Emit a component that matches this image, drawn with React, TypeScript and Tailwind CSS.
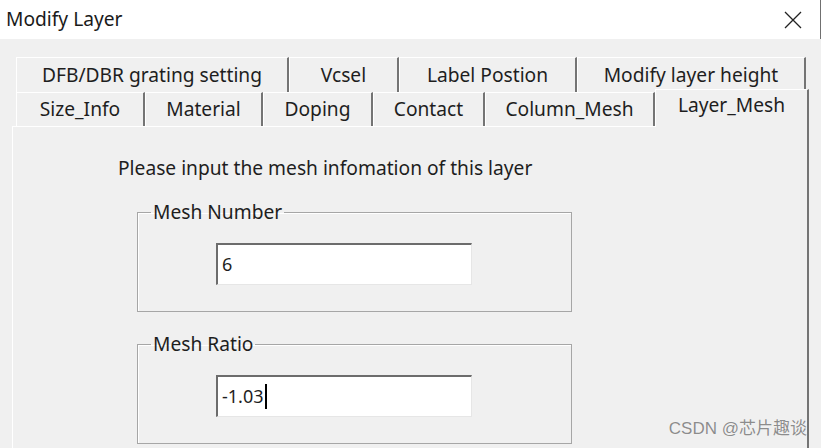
import React from 'react'

const font = { fontFamily: '"Noto Sans", Lato, sans-serif' }

type Tab = { label: string; width: string }

const backRow: Tab[] = [
  { label: 'DFB/DBR grating setting', width: 'w-[273px]' },
  { label: 'Vcsel', width: 'w-[110px]' },
  { label: 'Label Postion', width: 'w-[178px]' },
  { label: 'Modify layer height', width: 'w-[229px]' },
]

const frontRow: Tab[] = [
  { label: 'Size_Info', width: 'w-[129px]' },
  { label: 'Material', width: 'w-[118px]' },
  { label: 'Doping', width: 'w-[110px]' },
  { label: 'Contact', width: 'w-[112px]' },
  { label: 'Column_Mesh', width: 'w-[170px]' },
]

function TabButton({ tab }: { tab: Tab }) {
  return (
    <div
      className={`${tab.width} h-full flex items-center justify-center border-l border-t border-r-2 border-l-white border-t-white border-r-[#747474] bg-[#f0f0f0] text-[19.2px] text-[#1e1e1e]`}
    >
      {tab.label}
    </div>
  )
}

function GroupBox({ title, value, caret }: { title: string; value: string; caret?: boolean }) {
  return (
    <fieldset className="w-[435px] h-[112px] border border-[#a6a6a6] shadow-[inset_1px_1px_0_#ffffff] px-[13px]">
      <legend className="px-[2px] text-[19.2px] leading-[24px] text-[#1e1e1e]">{title}</legend>
      <div className="ml-[65px] mt-[19px] w-[256px] h-[42px] bg-white border-t-2 border-l-2 border-b border-r border-t-[#6c6c6c] border-l-[#6c6c6c] border-b-[#e6e6e6] border-r-[#e6e6e6] flex items-center pl-[4px] text-[18px] text-[#1e1e1e]">
        <span>{value}</span>
        {caret && <span className="ml-[1px] w-[2px] h-[25px] bg-black" />}
      </div>
    </fieldset>
  )
}

export default function App() {
  return (
    <div className="w-[821px] h-[448px] bg-[#f0f0f0] overflow-hidden flex flex-col relative" style={font}>
      <div className="h-[39px] bg-white flex items-center justify-between pl-[6px] border-r border-r-[#707070]">
        <span className="text-[19.2px] text-[#1a1a1a]">Modify Layer</span>
        <svg width="18" height="18" viewBox="0 0 18 18" className="mr-[18px]">
          <path d="M1 1 L17 17 M17 1 L1 17" stroke="#222" strokeWidth="1.3" />
        </svg>
      </div>

      <div className="flex flex-col flex-1">
        <div className="flex h-[35px] mt-[18px] ml-[16px]">
          {backRow.map((t) => (
            <TabButton key={t.label} tab={t} />
          ))}
        </div>
        <div className="flex items-end h-[34px] ml-[16px] relative z-10">
          {frontRow.map((t) => (
            <TabButton key={t.label} tab={t} />
          ))}
          <div className="w-[154px] h-[38px] -mb-[1px] flex justify-center pt-[1px] border-l border-t border-r-2 border-l-white border-t-white border-r-[#747474] bg-[#f0f0f0] text-[19.2px] text-[#1e1e1e]">
            Layer_Mesh
          </div>
        </div>

        <div className="ml-[12px] w-[797px] flex-1 border-l border-t border-r-2 border-l-white border-t-white border-r-[#747474] pl-[105px] pt-[29px]">
          <p className="text-[19.2px] leading-[24px] text-[#1e1e1e]">Please input the mesh infomation of this layer</p>
          <div className="ml-[19px] mt-[20px] flex flex-col gap-[20px]">
            <GroupBox title="Mesh Number" value="6" />
            <GroupBox title="Mesh Ratio" value="-1.03" caret />
          </div>
        </div>
      </div>

      <span
        className="absolute right-[14px] bottom-[7px] text-[17px] text-[#8c8c8c] [text-shadow:0_0_1px_#ffffff]"
        style={{ fontFamily: '"Liberation Sans", "Noto Sans CJK SC", sans-serif' }}
      >
        CSDN @芯片趣谈
      </span>
    </div>
  )
}
